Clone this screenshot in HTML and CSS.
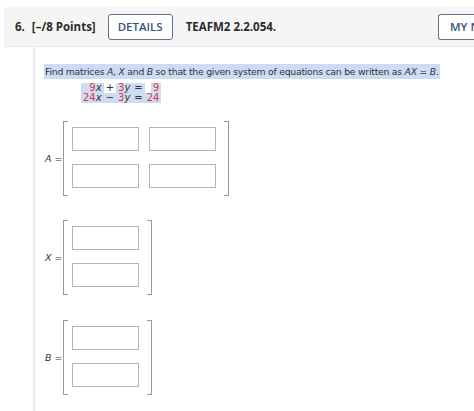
FILE: index.html
```html
<!DOCTYPE html>
<html>
<head>
<meta charset="utf-8">
<link rel="stylesheet" href="styles.css">
</head>
<body>
<div class="header">
  <span class="qnum">6.</span>
  <span class="points">[–/8 Points]</span>
  <button class="btn details">DETAILS</button>
  <span class="code">TEAFM2 2.2.054.</span>
  <button class="btn notes">MY NOTES</button>
</div>
<div class="content">
  <p class="question"><span class="hl">Find matrices <i>A</i>, <i>X</i> and <i>B</i> so that the given system of equations can be written as <i>AX</i> = <i>B</i>.</span></p>
  <table class="eqs">
    <tr><td class="c r"><span class="n">9</span><i>x</i></td><td class="op">+</td><td class="c"><span class="n">3</span><i>y</i></td><td class="c">=</td><td class="gap"></td><td class="c r"><span class="n">9</span></td></tr>
    <tr><td class="c r"><span class="n">24</span><i>x</i></td><td class="op c">−</td><td class="c"><span class="n">3</span><i>y</i></td><td class="c">=</td><td class="c gap2" colspan="2"><span class="n">24</span></td></tr>
  </table>

  <div class="mrow mA">
    <span class="label"><i>A</i> =</span>
    <div class="matrix">
      <span class="lb"></span>
      <div class="cells two">
        <input class="cell" type="text"><input class="cell" type="text">
        <input class="cell" type="text"><input class="cell" type="text">
      </div>
      <span class="rb"></span>
    </div>
  </div>

  <div class="mrow mX">
    <span class="label"><i>X</i> =</span>
    <div class="matrix">
      <span class="lb"></span>
      <div class="cells one">
        <input class="cell" type="text">
        <input class="cell" type="text">
      </div>
      <span class="rb"></span>
    </div>
  </div>

  <div class="mrow mB">
    <span class="label"><i>B</i> =</span>
    <div class="matrix">
      <span class="lb"></span>
      <div class="cells one">
        <input class="cell" type="text">
        <input class="cell" type="text">
      </div>
      <span class="rb"></span>
    </div>
  </div>
</div>
</body>
</html>
```
FILE: styles.css
```css
html, body { margin: 0; padding: 0; background: #fff; }
body { width: 474px; height: 411px; overflow: hidden; }

.header {
  margin: 7px 0 0 4px;
  height: 39px;
  background: #f5f5f5;
  border-bottom: 1px solid #ececec;
  display: flex;
  align-items: center;
  font-family: "Open Sans", sans-serif;
  font-weight: 700;
  font-size: 11.5px;
  color: #2b2b2b;
  white-space: nowrap;
  overflow: hidden;
}
.qnum { margin-left: 11px; }
.points { margin-left: 7px; }
.btn {
  font-family: "Open Sans", sans-serif;
  font-weight: 600;
  font-size: 11.5px;
  color: #355478;
  background: #fff;
  border: 1px solid #5b7590;
  border-radius: 3px;
  height: 26px;
  padding: 0;
  flex: none;
}
.details { width: 65px; margin-left: 12px; }
.code { margin-left: 13px; }
.notes { width: 36px; margin-left: auto; margin-right: 0; text-align: left; padding-left: 11px; overflow: hidden; border-right: none; border-radius: 3px 0 0 3px; }

.content {
  margin-left: 33px;
  border-left: 2px solid #ebebeb;
  padding-left: 9px;
  height: 364px;
  font-family: "DejaVu Sans", Verdana, sans-serif;
  font-size: 9.3px;
  color: #333;
}
.question { margin: 0; padding-top: 18px; line-height: 14px; letter-spacing: -0.25px; white-space: nowrap; }
.hl { background: #cddcf4; padding: 2px 1px; }

.eqs {
  border-collapse: separate;
  border-spacing: 0;
  margin: 4px 0 0 37px;
  line-height: 10px;
  font-size: 10px;
}
.eqs td { padding: 0 2px; text-align: right; }
.eqs td.c { background: #cddcf4; }
.eqs td.gap { padding: 0 3px; }
.n { color: #e0363c; }

.mrow { display: flex; align-items: center; }
.mA { margin-top: 18px; }
.mX { margin-top: 24px; }
.mB { margin-top: 25px; }
.label { width: 14px; text-align: left; margin-left: 1px; margin-right: 4px; font-size: 9.5px; color: #333; white-space: nowrap; }
.matrix { display: flex; align-items: stretch; }
.lb, .rb { width: 4px; border: 1.5px solid #999; }
.lb { border-right: none; margin-right: 4px; }
.rb { border-left: none; margin-left: 8px; }
.cells { display: grid; gap: 13px 10px; padding: 6px 0 8px; }
.cells.two { grid-template-columns: 67px 67px; }
.cells.one { grid-template-columns: 67px; }
.cell {
  box-sizing: border-box;
  width: 67px;
  height: 24px;
  margin: 0;
  border: 1px solid #b5b5b5;
  background: #fff;
  padding: 0;
}
```
